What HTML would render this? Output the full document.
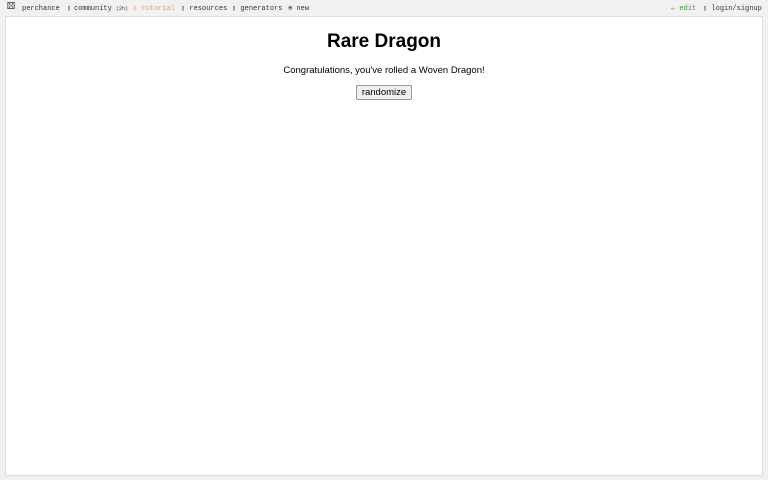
<!DOCTYPE html>
<html><head><style>
html,body{margin:0;padding:0;width:768px;height:480px;background:#f1f1f1;overflow:hidden}
.bar{position:absolute;top:1px;left:0;right:0;height:16px;font-family:"Liberation Mono",monospace;font-size:7px;color:#333;line-height:16px}
.bar span{position:absolute;top:0;white-space:nowrap}
.frame{position:absolute;left:5px;top:16px;width:756px;height:458px;background:#fff;border:1px solid #ddd}
h1{font-family:"Liberation Sans",sans-serif;font-size:19px;font-weight:bold;margin:0;position:absolute;top:14px;left:0;right:0;text-align:center}
p{font-family:"Liberation Sans",sans-serif;font-size:9.5px;margin:0;position:absolute;top:48px;left:0;right:0;text-align:center}
button{position:absolute;left:350px;top:68px;width:56px;height:15px;font-family:"Liberation Sans",sans-serif;font-size:9.5px;padding:0;background:#efefef;border:1px solid #999;border-radius:2px}
</style></head><body>
<div class="bar">
<span style="left:7px;top:-3px;font-size:13px">⚄</span>
<span style="left:22px">perchance</span>
<span style="left:67px">▯</span>
<span style="left:74px">community <small style="font-size:5px">(2h)</small></span>
<span style="left:133px;color:#e8a070">▯ tutorial</span>
<span style="left:181px">▯ resources</span>
<span style="left:232px">▯ generators</span>
<span style="left:288px">⊕ new</span>
<span style="left:671px;color:#3a9a3a">✏ edit</span>
<span style="left:703px">▯ login/signup</span>
</div>
<div class="frame">
<h1>Rare Dragon</h1>
<p>Congratulations, you've rolled a Woven Dragon!</p>
<button>randomize</button>
</div>
</body></html>
